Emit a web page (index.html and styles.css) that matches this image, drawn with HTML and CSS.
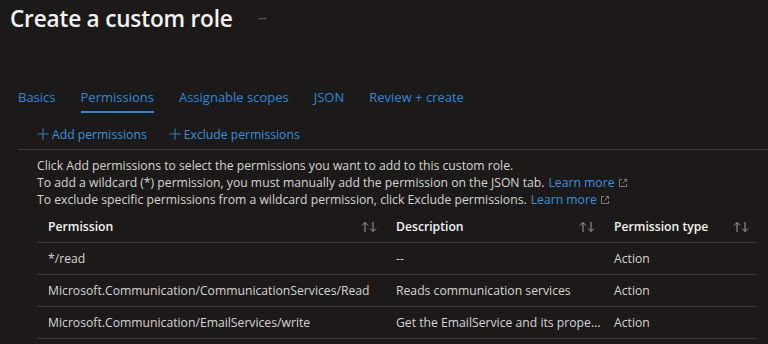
FILE: index.html
```html
<!DOCTYPE html>
<html>
<head>
<meta charset="utf-8">
<link rel="stylesheet" href="styles.css">
</head>
<body>
<div class="page">
  <div class="title-row">
    <h1 class="title">Create a custom role</h1>
    <span class="more">···</span>
  </div>
  <nav class="tabs">
    <span class="tab">Basics</span>
    <span class="tab active">Permissions</span>
    <span class="tab">Assignable scopes</span>
    <span class="tab">JSON</span>
    <span class="tab">Review + create</span>
  </nav>
  <div class="toolbar">
    <span class="tool"><svg class="plus" viewBox="0 0 12 12" width="12" height="12"><path d="M6 0.5v11M0.5 6h11" stroke="currentColor" stroke-width="1.1" fill="none"/></svg>Add permissions</span>
    <span class="tool"><svg class="plus" viewBox="0 0 12 12" width="12" height="12"><path d="M6 0.5v11M0.5 6h11" stroke="currentColor" stroke-width="1.1" fill="none"/></svg>Exclude permissions</span>
  </div>
  <div class="content">
    <div class="info">
      <p>Click Add permissions to select the permissions you want to add to this custom role.</p>
      <p>To add a wildcard (*) permission, you must manually add the permission on the JSON tab. <span class="link">Learn more</span><svg class="ext" viewBox="0 0 10 10" width="10" height="10"><path d="M4 1.5H1.5v7h7V6M6 1.5h2.5V4M8.5 1.5L4.5 5.5" stroke="currentColor" stroke-width="0.9" fill="none"/></svg></p>
      <p>To exclude specific permissions from a wildcard permission, click Exclude permissions. <span class="link">Learn more</span><svg class="ext" viewBox="0 0 10 10" width="10" height="10"><path d="M4 1.5H1.5v7h7V6M6 1.5h2.5V4M8.5 1.5L4.5 5.5" stroke="currentColor" stroke-width="0.9" fill="none"/></svg></p>
    </div>
    <div class="table">
      <div class="row head">
        <div class="cell"><span>Permission</span><svg class="sort" viewBox="0 0 16 12" width="16" height="12"><path d="M4 11V1.5M1 4.5l3-3 3 3M12 1v9.5M9 7.5l3 3 3-3" stroke="currentColor" stroke-width="1" fill="none"/></svg></div>
        <div class="cell"><span>Description</span><svg class="sort" viewBox="0 0 16 12" width="16" height="12"><path d="M4 11V1.5M1 4.5l3-3 3 3M12 1v9.5M9 7.5l3 3 3-3" stroke="currentColor" stroke-width="1" fill="none"/></svg></div>
        <div class="cell"><span>Permission type</span><svg class="sort" viewBox="0 0 16 12" width="16" height="12"><path d="M4 11V1.5M1 4.5l3-3 3 3M12 1v9.5M9 7.5l3 3 3-3" stroke="currentColor" stroke-width="1" fill="none"/></svg></div>
      </div>
      <div class="row">
        <div class="cell">*/read</div>
        <div class="cell">--</div>
        <div class="cell">Action</div>
      </div>
      <div class="row">
        <div class="cell">Microsoft.Communication/CommunicationServices/Read</div>
        <div class="cell">Reads communication services</div>
        <div class="cell">Action</div>
      </div>
      <div class="row">
        <div class="cell">Microsoft.Communication/EmailServices/write</div>
        <div class="cell desc"><span class="trunc">Get the EmailService and its properties</span></div>
        <div class="cell">Action</div>
      </div>
    </div>
  </div>
</div>
</body>
</html>
```
FILE: styles.css
```css
* { box-sizing: border-box; }
html, body {
  margin: 0;
  padding: 0;
  background: #1b1a19;
  height: 100%;
  overflow: hidden;
}
body {
  font-family: "Open Sans", "Noto Sans", sans-serif;
  color: #d6d4d2;
  font-size: 12.2px;
}
.page {
  padding-top: 3px;
}
.title-row {
  display: flex;
  align-items: center;
  padding-left: 10px;
  height: 30px;
}
.title {
  margin: 0;
  font-size: 22.6px;
  font-weight: 600;
  color: #f3f2f1;
  letter-spacing: -0.2px;
}
.more {
  margin-left: 26px;
  color: #a19f9d;
  font-size: 10px;
}
.tabs {
  display: flex;
  gap: 25px;
  padding-left: 18px;
  margin-top: 55px;
}
.tab {
  font-size: 13px;
  color: #2f86d9;
  padding-bottom: 5px;
  border-bottom: 2px solid transparent;
  line-height: 18px;
}
.tab.active {
  border-bottom-color: #2f86d9;
}
.toolbar {
  display: flex;
  gap: 22px;
  padding-left: 37px;
  margin-top: 10px;
  height: 22px;
  align-items: center;
}
.tool {
  display: flex;
  align-items: center;
  color: #3a8fdf;
  font-size: 12.2px;
}
.plus {
  margin-right: 3px;
  color: #2f7fcf;
}
.content {
  margin-left: 18px;
  margin-top: 4px;
  border-top: 1px solid #3b3a39;
}
.info {
  padding-left: 19px;
  padding-top: 7px;
}
.info p {
  margin: 0;
  height: 17px;
  line-height: 17px;
  display: flex;
  align-items: center;
  white-space: nowrap;
}
.link {
  color: #3a8fdf;
  margin-left: 4px;
}
.ext {
  margin-left: 3px;
  color: #8a8886;
}
.table {
  margin-left: 19px;
  margin-top: 3px;
  width: 720px;
}
.row {
  display: grid;
  grid-template-columns: 348px 218px 154px;
  height: 32px;
  border-bottom: 1px solid #3b3a39;
  align-items: center;
}
.row.head {
  font-weight: 600;
  color: #f3f2f1;
}
.cell {
  padding-left: 11px;
  padding-right: 8px;
  display: flex;
  align-items: center;
  justify-content: space-between;
  white-space: nowrap;
  overflow: hidden;
}
.cell.desc {
  padding-right: 2px;
}
.trunc {
  overflow: hidden;
  text-overflow: ellipsis;
  white-space: nowrap;
  max-width: 207px;
}
.sort {
  color: #a19f9d;
  flex: none;
}
```
